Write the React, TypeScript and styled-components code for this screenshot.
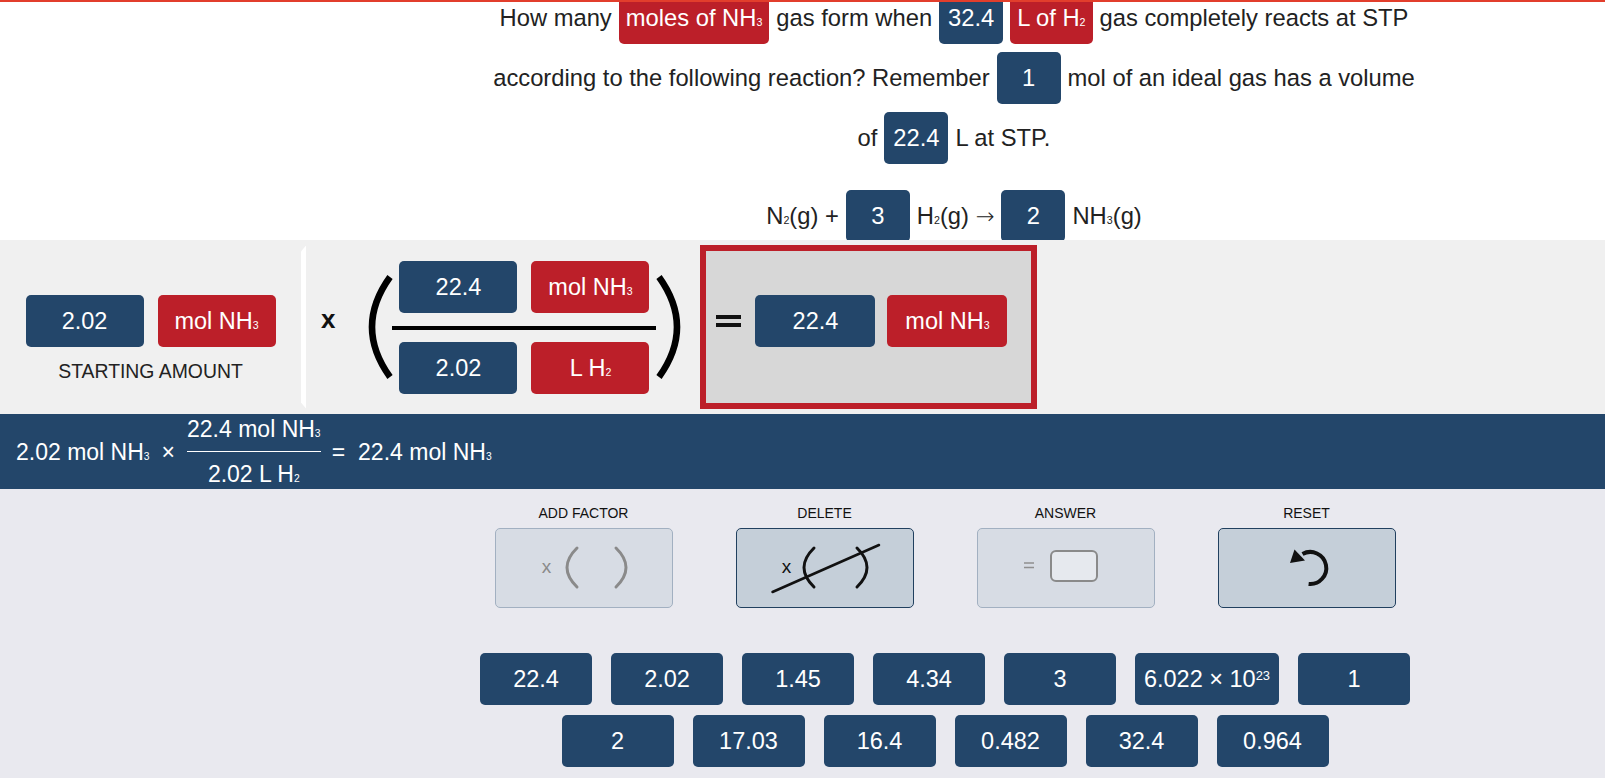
import React from 'react'
import styled, { createGlobalStyle } from 'styled-components'

const NAVY = '#23466a'
const RED = '#bc1f29'

const GlobalStyle = createGlobalStyle`
  * {
    box-sizing: border-box;
  }

  html,
  body {
    margin: 0;
    padding: 0;
    background: #e9e9ef;
  }

  body {
    font-family: 'Liberation Sans', Arial, sans-serif;
    color: #222;
  }
`

type Tone = 'navy' | 'red'

const Sub = styled.span`
  font-size: 0.45em;
  line-height: 0;
  vertical-align: baseline;
`

const Sup = styled.span`
  font-size: 0.55em;
  line-height: 0;
  vertical-align: 7px;
`

const Words = styled.span`
  white-space: pre;
`

const Arrow = styled.span`
  font-family: 'DejaVu Sans', sans-serif;
  font-weight: 200;
  font-size: 0.95em;
`

/* ---------- question ---------- */

const QuestionArea = styled.section`
  height: 240px;
  overflow: hidden;
  background: #fff;
  border-top: 2px solid #e23e2c;
  padding-left: 303px;
`

const Question = styled.div`
  margin-top: -14px;
  font-size: 23.75px;
  color: #222;
`

const QuestionLine = styled.div`
  height: 60px;
  display: flex;
  align-items: center;
  justify-content: center;
  gap: 7px;
`

const ReactionLine = styled(QuestionLine)`
  margin-top: 18px;
`

const Chip = styled.span<{ $tone?: Tone }>`
  display: inline-block;
  height: 52px;
  min-width: 64px;
  padding: 0 7px;
  border-radius: 5px;
  background: ${p => (p.$tone === 'red' ? RED : NAVY)};
  color: #fff;
  line-height: 52px;
  text-align: center;
  white-space: pre;
`

/* ---------- workspace ---------- */

const Workspace = styled.section`
  height: 174px;
  background: #f0f0f0;
  display: flex;
  align-items: center;
`

const StartColumn = styled.div`
  width: 301px;
  align-self: stretch;
  display: flex;
  flex-direction: column;
  align-items: center;
  padding-top: 55px;
`

const TileRow = styled.div<{ $gap: number }>`
  display: flex;
  gap: ${p => p.$gap}px;
`

const Tile = styled.div<{ $tone?: Tone; $w?: number }>`
  width: ${p => p.$w ?? 118}px;
  height: 52px;
  border-radius: 5px;
  background: ${p => (p.$tone === 'red' ? RED : NAVY)};
  color: #fff;
  font-size: 23.5px;
  line-height: 52px;
  text-align: center;
  white-space: nowrap;
`

const StartLabel = styled.div`
  margin-top: 13px;
  font-size: 19.4px;
  line-height: 22px;
  color: #222;
`

const Divider = styled.div`
  width: 5px;
  height: 163px;
  background: #fff;
  clip-path: polygon(0 6px, 100% 0, 100% 100%, 0 calc(100% - 6px));
`

const Times = styled.span`
  margin: 0 0 17px 15px;
  font-size: 26px;
  font-weight: 700;
  line-height: 26px;
  color: #111;
`

const ParenSvg = styled.svg<{ $flip?: boolean; $lead: number }>`
  width: 26px;
  height: 106px;
  flex: none;
  margin-left: ${p => p.$lead}px;
  transform: ${p => (p.$flip ? 'scaleX(-1)' : 'none')};
`

const Fraction = styled.div`
  width: 264px;
  margin-left: -1px;
  display: flex;
  flex-direction: column;
  align-items: center;
`

const FractionBar = styled.div`
  width: 100%;
  height: 4px;
  background: #000;
  margin: 13px 0 12px;
`

const ResultBox = styled.div`
  margin-left: 18px;
  width: 337px;
  height: 164px;
  border: 6px solid ${RED};
  background: #d7d7d7;
  display: flex;
  align-items: center;
  padding: 0 0 13px 10px;
`

const Equals = styled.span`
  width: 25px;
  height: 12px;
  margin-right: 14px;
  border-top: 4px solid #111;
  border-bottom: 4px solid #111;
`

/* ---------- summary bar ---------- */

const Summary = styled.section`
  height: 75px;
  background: ${NAVY};
  color: #fff;
  display: flex;
  align-items: center;
  padding-left: 16px;
  font-size: 23px;
  line-height: 24px;
`

const SummaryOp = styled.span<{ $before: number; $after: number }>`
  margin: 0 ${p => p.$after}px 0 ${p => p.$before}px;
`

const SummaryFraction = styled.div`
  display: flex;
  flex-direction: column;
  align-items: center;
  padding: 0 3px;
`

const SummaryBar = styled.div`
  align-self: stretch;
  height: 1px;
  background: #fff;
  margin: 10px 0;
`

/* ---------- controls ---------- */

const Controls = styled.section`
  padding: 16px 0 0 285px;
  display: flex;
  flex-direction: column;
  align-items: center;
`

const ActionRow = styled.div`
  display: flex;
  gap: 63px;
`

const Action = styled.div`
  display: flex;
  flex-direction: column;
  align-items: center;
  gap: 7px;
`

const ActionLabel = styled.div`
  font-size: 14px;
  line-height: 16px;
  color: #111;
`

const ActionButton = styled.button<{ $enabled: boolean }>`
  width: 178px;
  height: 80px;
  padding: 0;
  border-radius: 5px;
  border: 1px solid ${p => (p.$enabled ? '#21405f' : '#a2b0c1')};
  background: ${p => (p.$enabled ? '#c5cfd9' : '#d7dce4')};
  display: flex;
  align-items: center;
  justify-content: center;
  cursor: ${p => (p.$enabled ? 'pointer' : 'default')};

  svg {
    display: block;
  }
`

const Pool = styled.div`
  margin-top: 45px;
  width: 960px;
  display: flex;
  flex-wrap: wrap;
  justify-content: center;
  column-gap: 19px;
  row-gap: 10px;
`

const Paren = ({ flip, lead = 0 }: { flip?: boolean; lead?: number }) => (
  <ParenSvg viewBox="0 0 26 106" $flip={flip} $lead={lead}>
    <path d="M23 3 Q-13 53 23 103" fill="none" stroke="#000" strokeWidth="6.5" />
  </ParenSvg>
)

const AddFactorIcon = () => (
  <svg width="176" height="78" viewBox="0 0 176 78">
    <text x="50.5" y="44" fontSize="19" fill="#8a8a8a" textAnchor="middle" fontFamily="Liberation Sans, Arial, sans-serif">
      x
    </text>
    <g fill="none" stroke="#8a8a8a" strokeWidth="3" strokeLinecap="round">
      <path d="M81 19 Q61 38.5 81 58" />
      <path d="M120 19 Q140 38.5 120 58" />
    </g>
  </svg>
)

const DeleteIcon = () => (
  <svg width="176" height="78" viewBox="0 0 176 78">
    <text x="49.5" y="44" fontSize="19" fill="#111" textAnchor="middle" fontFamily="Liberation Sans, Arial, sans-serif">
      x
    </text>
    <g fill="none" stroke="#111" strokeLinecap="round">
      <path d="M77 19 Q57 38.5 77 58" strokeWidth="3" />
      <path d="M120 19 Q140 38.5 120 58" strokeWidth="3" />
      <path d="M35.5 63 L142 16" strokeWidth="2.5" />
    </g>
  </svg>
)

const AnswerIcon = () => (
  <svg width="176" height="78" viewBox="0 0 176 78">
    <g stroke="#8f8f8f" strokeWidth="1.5">
      <path d="M46 34 H56" />
      <path d="M46 38.5 H56" />
    </g>
    <rect x="73" y="22" width="46" height="30" rx="5" fill="#e6e9ee" stroke="#8a8a8a" strokeWidth="2" />
  </svg>
)

const ResetIcon = () => (
  <svg width="176" height="78" viewBox="0 0 176 78">
    <path d="M83.5 25 A16 16 0 1 1 89.6 54.9" fill="none" stroke="#111" strokeWidth="4" />
    <path d="M71 34 L75.5 20.5 L86 31.5 Z" fill="#111" />
  </svg>
)

const ACTIONS = [
  { label: 'ADD FACTOR', enabled: false, icon: <AddFactorIcon /> },
  { label: 'DELETE', enabled: true, icon: <DeleteIcon /> },
  { label: 'ANSWER', enabled: false, icon: <AnswerIcon /> },
  { label: 'RESET', enabled: true, icon: <ResetIcon /> },
]

const POOL: { key: string; content: React.ReactNode; w?: number }[] = [
  { key: 'a', content: '22.4' },
  { key: 'b', content: '2.02' },
  { key: 'c', content: '1.45' },
  { key: 'd', content: '4.34' },
  { key: 'e', content: '3' },
  {
    key: 'f',
    content: (
      <>
        6.022 × 10<Sup>23</Sup>
      </>
    ),
    w: 144,
  },
  { key: 'g', content: '1' },
  { key: 'h', content: '2' },
  { key: 'i', content: '17.03' },
  { key: 'j', content: '16.4' },
  { key: 'k', content: '0.482' },
  { key: 'l', content: '32.4' },
  { key: 'm', content: '0.964' },
]

const MolNH3 = () => (
  <>
    mol NH<Sub>3</Sub>
  </>
)

const App = () => {
  return (
    <>
      <GlobalStyle />
      <QuestionArea>
        <Question>
          <QuestionLine>
            <Words>How many</Words>
            <Chip $tone="red">
              moles of NH<Sub>3</Sub>
            </Chip>
            <Words>gas form when</Words>
            <Chip>32.4</Chip>
            <Chip $tone="red">
              L of H<Sub>2</Sub>
            </Chip>
            <Words>gas completely reacts at STP</Words>
          </QuestionLine>
          <QuestionLine>
            <Words>according to the following reaction? Remember</Words>
            <Chip>1</Chip>
            <Words>mol of an ideal gas has a volume</Words>
          </QuestionLine>
          <QuestionLine>
            <Words>of</Words>
            <Chip>22.4</Chip>
            <Words>L at STP.</Words>
          </QuestionLine>
          <ReactionLine>
            <Words>
              N<Sub>2</Sub>(g) +
            </Words>
            <Chip>3</Chip>
            <Words>
              H<Sub>2</Sub>(g) <Arrow>→</Arrow>
            </Words>
            <Chip>2</Chip>
            <Words>
              NH<Sub>3</Sub>(g)
            </Words>
          </ReactionLine>
        </Question>
      </QuestionArea>

      <Workspace>
        <StartColumn>
          <TileRow $gap={14}>
            <Tile>2.02</Tile>
            <Tile $tone="red">
              <MolNH3 />
            </Tile>
          </TileRow>
          <StartLabel>STARTING AMOUNT</StartLabel>
        </StartColumn>
        <Divider />
        <Times>x</Times>
        <Paren lead={32} />
        <Fraction>
          <TileRow $gap={14}>
            <Tile>22.4</Tile>
            <Tile $tone="red">
              <MolNH3 />
            </Tile>
          </TileRow>
          <FractionBar />
          <TileRow $gap={14}>
            <Tile>2.02</Tile>
            <Tile $tone="red">
              L H<Sub>2</Sub>
            </Tile>
          </TileRow>
        </Fraction>
        <Paren flip />
        <ResultBox>
          <Equals />
          <TileRow $gap={12}>
            <Tile $w={120}>22.4</Tile>
            <Tile $w={120} $tone="red">
              <MolNH3 />
            </Tile>
          </TileRow>
        </ResultBox>
      </Workspace>

      <Summary>
        <Words>
          2.02 mol NH<Sub>3</Sub>
        </Words>
        <SummaryOp $before={12} $after={9}>
          ×
        </SummaryOp>
        <SummaryFraction>
          <Words>
            22.4 mol NH<Sub>3</Sub>
          </Words>
          <SummaryBar />
          <Words>
            2.02 L H<Sub>2</Sub>
          </Words>
        </SummaryFraction>
        <SummaryOp $before={8} $after={13}>
          =
        </SummaryOp>
        <Words>
          22.4 mol NH<Sub>3</Sub>
        </Words>
      </Summary>

      <Controls>
        <ActionRow>
          {ACTIONS.map(a => (
            <Action key={a.label}>
              <ActionLabel>{a.label}</ActionLabel>
              <ActionButton $enabled={a.enabled}>{a.icon}</ActionButton>
            </Action>
          ))}
        </ActionRow>
        <Pool>
          {POOL.map(card => (
            <Tile key={card.key} $w={card.w ?? 112}>
              {card.content}
            </Tile>
          ))}
        </Pool>
      </Controls>
    </>
  )
}

export default App
